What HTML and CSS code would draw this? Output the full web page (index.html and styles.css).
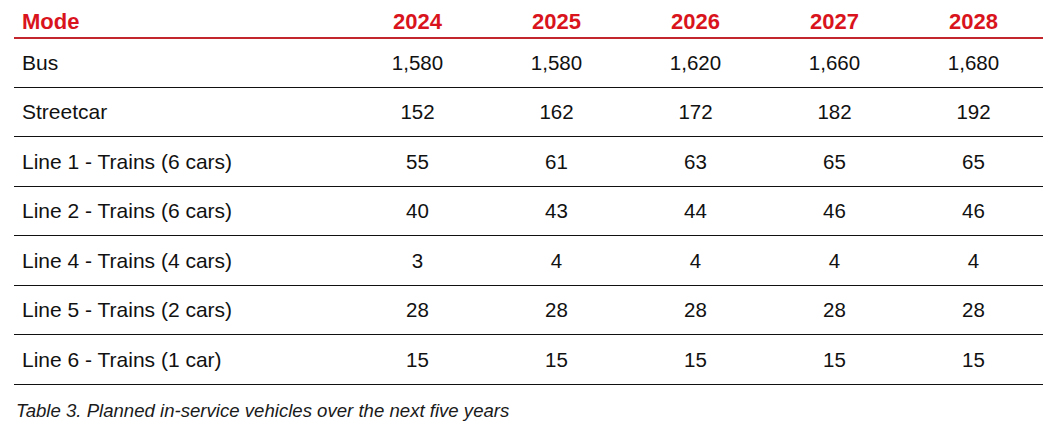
FILE: index.html
```html
<!DOCTYPE html>
<html lang="en">
<head>
<meta charset="utf-8">
<title>Planned in-service vehicles</title>
<link rel="stylesheet" href="styles.css">
</head>
<body>
<figure class="figure">
  <table class="fleet">
    <colgroup>
      <col class="col-mode">
      <col class="col-year"><col class="col-year"><col class="col-year"><col class="col-year"><col class="col-year">
    </colgroup>
    <thead>
      <tr>
        <th class="mode">Mode</th>
        <th>2024</th><th>2025</th><th>2026</th><th>2027</th><th>2028</th>
      </tr>
    </thead>
    <tbody>
      <tr><td class="mode">Bus</td><td>1,580</td><td>1,580</td><td>1,620</td><td>1,660</td><td>1,680</td></tr>
      <tr><td class="mode">Streetcar</td><td>152</td><td>162</td><td>172</td><td>182</td><td>192</td></tr>
      <tr><td class="mode">Line 1 - Trains (6 cars)</td><td>55</td><td>61</td><td>63</td><td>65</td><td>65</td></tr>
      <tr><td class="mode">Line 2 - Trains (6 cars)</td><td>40</td><td>43</td><td>44</td><td>46</td><td>46</td></tr>
      <tr><td class="mode">Line 4 - Trains (4 cars)</td><td>3</td><td>4</td><td>4</td><td>4</td><td>4</td></tr>
      <tr><td class="mode">Line 5 - Trains (2 cars)</td><td>28</td><td>28</td><td>28</td><td>28</td><td>28</td></tr>
      <tr><td class="mode">Line 6 - Trains (1 car)</td><td>15</td><td>15</td><td>15</td><td>15</td><td>15</td></tr>
    </tbody>
  </table>
  <figcaption class="caption">Table 3. Planned in-service vehicles over the next five years</figcaption>
</figure>
</body>
</html>
```
FILE: styles.css
```css
html, body {
  margin: 0;
  padding: 0;
  background: #ffffff;
}

body {
  font-family: "Liberation Sans", Arial, sans-serif;
  color: #111111;
}

.figure {
  margin: 0;
  padding: 0 0 0 14px;
}

.fleet {
  width: 1029px;
  border-collapse: collapse;
  table-layout: fixed;
}

.col-mode { width: 334px; }
.col-year { width: 139px; }

.fleet th {
  font-size: 22px;
  font-weight: bold;
  color: #d9141c;
  line-height: 25px;
  padding: 9px 0 3px 0;
  text-align: center;
  border-bottom: 2px solid #c4262d;
}

.fleet td {
  font-size: 20.5px;
  line-height: 48px;
  padding: 0;
  text-align: center;
  border-bottom: 1px solid #111111;
}

.fleet tbody tr:nth-child(2n+3) td {
  line-height: 49px;
}

.fleet .mode {
  text-align: left;
  padding-left: 8px;
}

.fleet td.mode {
  font-size: 21px;
}

.caption {
  margin: 15px 0 0 2px;
  font-size: 18.6px;
  font-style: italic;
  color: #1a1a1a;
}
```
